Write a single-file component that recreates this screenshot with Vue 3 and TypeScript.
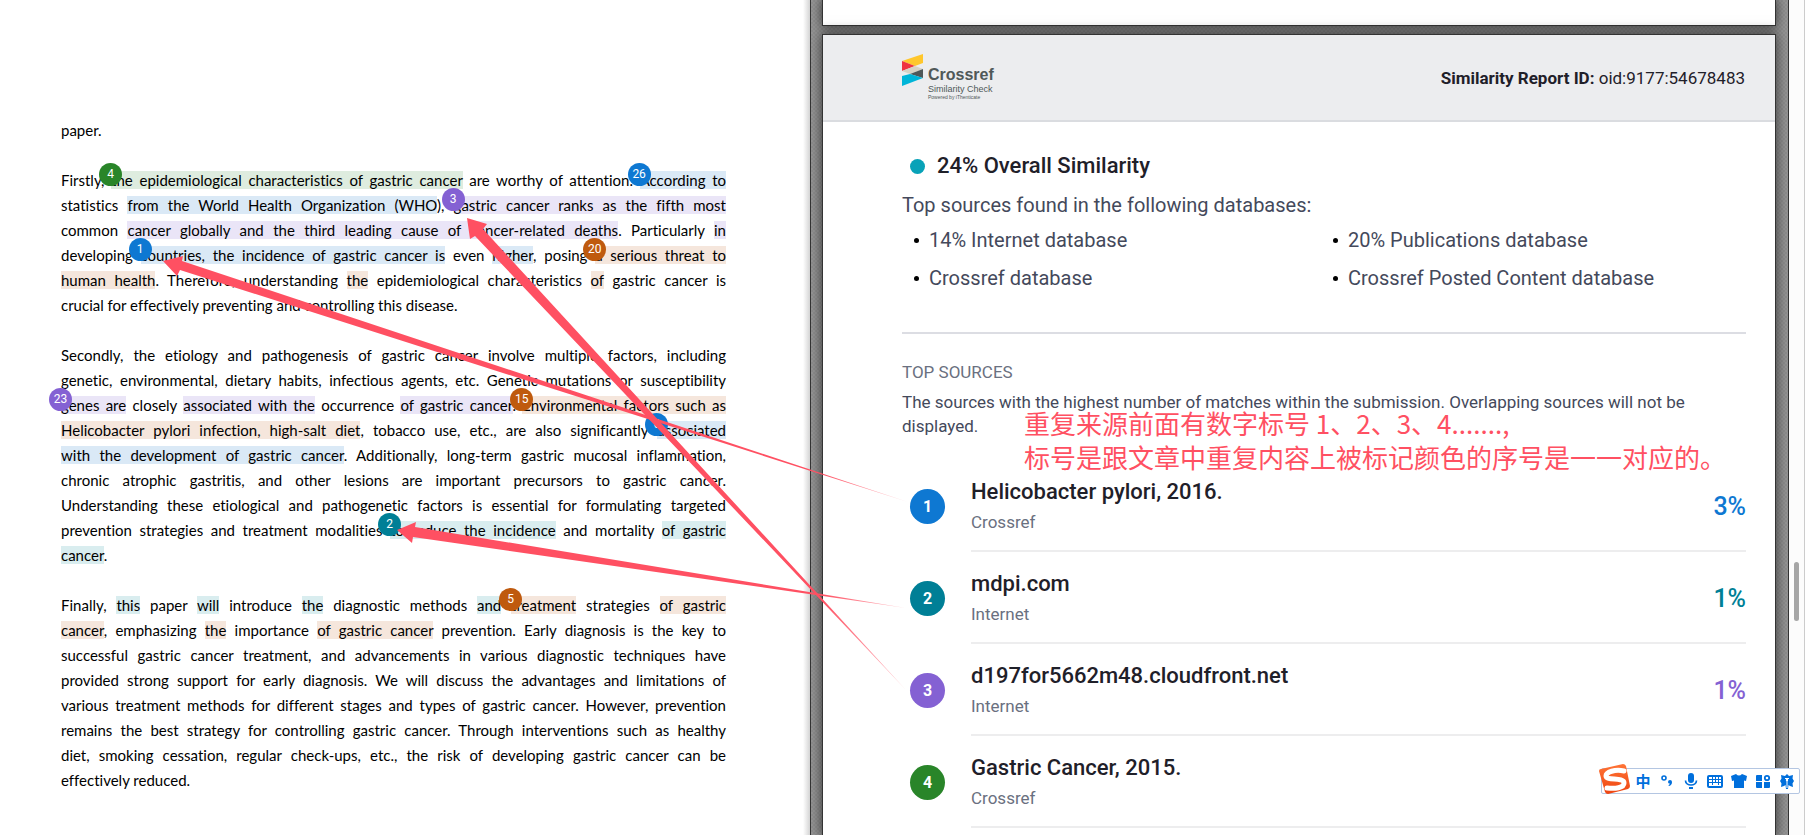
<script setup lang="ts">
type Tone = 'green' | 'blue' | 'purple' | 'orange' | 'teal'

interface Segment {
  text: string
  tone?: Tone
  badge?: number
}

interface Source {
  rank: number
  title: string
  kind: string
  percent: string
  tone: Tone
}

const plain = (text: string): Segment => ({ text })
const hit = (tone: Tone, text: string, badge?: number): Segment => ({ text, tone, badge })

const paragraphs: Segment[][][] = [
  [[plain('paper.')]],
  [
    [
      plain('Firstly, '),
      hit('green', 'the epidemiological characteristics of gastric cancer', 4),
      plain(' are worthy of attention. '),
      hit('blue', 'According to', 26),
    ],
    [
      plain('statistics '),
      hit('blue', 'from the World Health Organization (WHO'),
      plain('), '),
      hit('purple', 'gastric cancer ranks as the fifth most', 3),
    ],
    [
      plain('common '),
      hit('purple', 'cancer globally and the third leading cause of cancer-related deaths'),
      plain('. Particularly '),
      hit('purple', 'in'),
    ],
    [
      plain('developing '),
      hit('blue', 'countries, the incidence of gastric cancer is', 1),
      plain(' even '),
      hit('blue', 'higher'),
      plain(', posing '),
      hit('orange', 'a serious threat to', 20),
    ],
    [
      hit('orange', 'human health'),
      plain('. Therefore, understanding '),
      hit('orange', 'the'),
      plain(' epidemiological characteristics '),
      hit('orange', 'of'),
      plain(' gastric cancer is'),
    ],
    [plain('crucial for effectively preventing and controlling this disease.')],
  ],
  [
    [plain('Secondly, the etiology and pathogenesis of gastric cancer involve multiple factors, including')],
    [plain('genetic, environmental, dietary habits, infectious agents, etc. Genetic mutations or susceptibility')],
    [
      hit('purple', 'genes are', 23),
      plain(' closely '),
      hit('purple', 'associated with the'),
      plain(' occurrence '),
      hit('purple', 'of gastric cancer'),
      plain('. '),
      hit('orange', 'Environmental factors such as', 15),
    ],
    [
      hit('orange', 'Helicobacter pylori infection, high-salt diet'),
      plain(', tobacco use, etc., are also significantly '),
      hit('blue', 'associated', 6),
    ],
    [
      hit('blue', 'with the development of gastric cancer'),
      plain('. Additionally, long-term gastric mucosal inflammation,'),
    ],
    [plain('chronic atrophic gastritis, and other lesions are important precursors to gastric cancer.')],
    [plain('Understanding these etiological and pathogenetic factors is essential for formulating targeted')],
    [
      plain('prevention strategies and treatment modalities '),
      hit('teal', 'to reduce the incidence', 2),
      plain(' and mortality '),
      hit('teal', 'of gastric'),
    ],
    [hit('teal', 'cancer'), plain('.')],
  ],
  [
    [
      plain('Finally, '),
      hit('teal', 'this'),
      plain(' paper '),
      hit('teal', 'will'),
      plain(' introduce '),
      hit('teal', 'the'),
      plain(' diagnostic methods '),
      hit('teal', 'and'),
      plain(' '),
      hit('orange', 'treatment', 5),
      plain(' strategies '),
      hit('orange', 'of gastric'),
    ],
    [
      hit('orange', 'cancer'),
      plain(', emphasizing '),
      hit('orange', 'the'),
      plain(' importance '),
      hit('orange', 'of gastric cancer'),
      plain(' prevention. Early diagnosis is the key to'),
    ],
    [plain('successful gastric cancer treatment, and advancements in various diagnostic techniques have')],
    [plain('provided strong support for early diagnosis. We will discuss the advantages and limitations of')],
    [plain('various treatment methods for different stages and types of gastric cancer. However, prevention')],
    [plain('remains the best strategy for controlling gastric cancer. Through interventions such as healthy')],
    [plain('diet, smoking cessation, regular check-ups, etc., the risk of developing gastric cancer can be')],
    [plain('effectively reduced.')],
  ],
]

const databases: string[] = [
  '14% Internet database',
  '20% Publications database',
  'Crossref database',
  'Crossref Posted Content database',
]

const sources: Source[] = [
  { rank: 1, title: 'Helicobacter pylori, 2016.', kind: 'Crossref', percent: '3%', tone: 'blue' },
  { rank: 2, title: 'mdpi.com', kind: 'Internet', percent: '1%', tone: 'teal' },
  { rank: 3, title: 'd197for5662m48.cloudfront.net', kind: 'Internet', percent: '1%', tone: 'purple' },
  { rank: 4, title: 'Gastric Cancer, 2015.', kind: 'Crossref', percent: '', tone: 'green' },
]
</script>

<template>
  <div class="viewer">
    <main class="paper">
      <p v-for="(lines, p) in paragraphs" :key="p" class="para">
        <span v-for="(line, l) in lines" :key="l" class="line"><span
          v-for="(seg, s) in line" :key="s" :class="seg.tone ? ['hit', 'tint-' + seg.tone] : null"
        ><a v-if="seg.badge" href="#sources" :class="['badge', 'solid-' + seg.tone]">{{ seg.badge }}</a>{{ seg.text }}</span></span>
      </p>
    </main>

    <section class="report-pane">
      <div class="report-scroll">
        <div class="sheet sheet-prev"></div>
        <article class="sheet">
          <header class="sheet-head">
            <svg class="logo" width="96" height="50" viewBox="0 0 96 50" role="img" aria-label="Crossref Similarity Check">
              <path fill="#ffc72c" d="M0 8 21 1v9l-8 3z" />
              <path fill="#ef3340" d="M0 8l13 5-13 5z" />
              <path fill="#d8d2c4" d="M0 18l13-5 8 3-13 5z" />
              <path fill="#4f5858" d="M21 16v9L8 21z" />
              <path fill="#00b5d8" d="M0 23l8-2 13 4-21 8z" />
              <text x="26" y="27" class="logo-name">Crossref</text>
              <text x="26" y="39" class="logo-sub">Similarity Check</text>
              <text x="26" y="46" class="logo-tiny">Powered by iThenticate</text>
            </svg>
            <div class="report-id"><b>Similarity Report ID:</b> oid:9177:54678483</div>
          </header>

          <div class="sheet-body">
            <h1 class="overall"><i class="dot"></i>24% Overall Similarity</h1>
            <p class="lead">Top sources found in the following databases:</p>
            <ul class="databases">
              <li v-for="name in databases" :key="name">{{ name }}</li>
            </ul>

            <section id="sources" class="sources">
              <h2>TOP SOURCES</h2>
              <p class="hint">
                The sources with the highest number of matches within the submission. Overlapping sources will not be
                displayed.
              </p>
              <p class="note">重复来源前面有数字标号 1、2、3、4.......,<br />标号是跟文章中重复内容上被标记颜色的序号是一一对应的。</p>
              <ol class="source-list">
                <li v-for="src in sources" :key="src.rank">
                  <span :class="['rank', 'solid-' + src.tone]">{{ src.rank }}</span>
                  <div class="source">
                    <div class="source-text">
                      <h3>{{ src.title }}</h3>
                      <p>{{ src.kind }}</p>
                    </div>
                    <strong v-if="src.percent" :class="'ink-' + src.tone">{{ src.percent }}</strong>
                  </div>
                </li>
              </ol>
            </section>
          </div>
        </article>
      </div>
      <div class="scrollbar"><div class="thumb"></div></div>
    </section>

    <svg class="arrows" viewBox="0 0 1805 835" preserveAspectRatio="none" aria-hidden="true">
      <defs>
        <linearGradient id="fade" gradientUnits="userSpaceOnUse" x1="820" y1="0" x2="910" y2="0">
          <stop offset="0" stop-color="#ff5062" />
          <stop offset="1" stop-color="#ff5062" stop-opacity="0.3" />
        </linearGradient>
      </defs>
      <g fill="url(#fade)">
        <path d="M163 261 183 256 182 261 908 502 180 270 177 276z" />
        <path d="M397 530 416 522 415 527 906 608 413 537 412 543z" />
        <path d="M467 218 487 224 483 229 906 690 475 236 470 239z" />
      </g>
    </svg>

    <div class="ime" role="toolbar" aria-label="Input method">
      <svg class="ime-logo" width="32" height="32" viewBox="0 0 32 32" aria-hidden="true">
        <defs>
          <linearGradient id="ember" x1="0" y1="0" x2="0" y2="1">
            <stop offset="0" stop-color="#ff7436" />
            <stop offset="1" stop-color="#ee4410" />
          </linearGradient>
        </defs>
        <path fill="url(#ember)" d="M2 5 24 0q2 0 3 2l4 20q0 2-2 3l-20 5q-2 0-3-2L0 7q0-2 2-2z" />
        <path fill="none" stroke="#fff" stroke-width="5" stroke-linecap="round" d="M25 7C16 5 7 8 7 12c0 5 18 1 18 7 0 5-9 6-17 5" />
      </svg>
      <button type="button" class="zh">中</button>
      <button type="button" aria-label="Punctuation">
        <svg width="18" height="18" viewBox="0 0 18 18">
          <circle cx="6" cy="6" r="2" fill="none" stroke="currentColor" stroke-width="1.6" />
          <path fill="currentColor" d="M10 10q0-2 2-2t2 2q0 3-3 4l-.6-.8q1.400-.6 1.400-1.600-1.800 0-1.800-1.600z" />
        </svg>
      </button>
      <button type="button" aria-label="Voice">
        <svg width="18" height="18" viewBox="0 0 18 18">
          <rect x="6" y="1" width="6" height="10" rx="3" fill="currentColor" />
          <path fill="none" stroke="currentColor" stroke-width="1.700" d="M3.500 8.500c0 6 11 6 11 0" />
          <rect x="7" y="15" width="4" height="2" fill="currentColor" />
        </svg>
      </button>
      <button type="button" aria-label="Keyboard">
        <svg width="18" height="18" viewBox="0 0 18 18">
          <rect x="2" y="4" width="14" height="11" rx="1" fill="#fff" stroke="currentColor" stroke-width="2" />
          <path fill="none" stroke="currentColor" stroke-width="1" d="M6.500 5v8M9.500 5v6M12.500 5v8M3 7.500h12M3 10.500h12" />
        </svg>
      </button>
      <button type="button" aria-label="Skin">
        <svg width="18" height="18" viewBox="0 0 18 18">
          <path fill="currentColor" d="M6 2q3 3 6 0l5 2-1 5-2-.5V16H4V8.500L2 9 1 4z" />
        </svg>
      </button>
      <button type="button" aria-label="Toolbox">
        <svg width="18" height="18" viewBox="0 0 18 18">
          <g fill="currentColor">
            <path d="M3 3h5v6H2V4q0-1 1-1zM2 10h6v6H3q-1 0-1-1zM10 10h6v5q0 1-1 1h-5z" />
          </g>
          <circle cx="13" cy="6" r="2.200" fill="none" stroke="currentColor" stroke-width="1.800" />
        </svg>
      </button>
      <button type="button" aria-label="Settings">
        <svg width="18" height="18" viewBox="0 0 18 18">
          <path fill="currentColor" d="M9 2 11 4l4-1-.5 3.500L16 9l-1.500 2.500L15 15l-3-1-1.500-1-.5 4H8l-.5-4L6 14l-3 1 .5-3.500L2 9l1.500-2.500L3 3l4 1z" />
          <path fill="none" stroke="#fff" stroke-width="1" d="M9 9v7M7 6.500h4" />
          <circle cx="9" cy="8" r="1.200" fill="#fff" />
        </svg>
      </button>
    </div>
  </div>
</template>

<style>
body {
  margin: 0;
  overflow: hidden;
}
</style>

<style scoped>
.viewer {
  position: relative;
  display: grid;
  grid-template-columns: 810fr 995fr;
  height: 100vh;
  overflow: hidden;
  background: #fff;
  font-family: Roboto, "Noto Sans", sans-serif;
}

h1,
h2,
h3,
p,
ul,
ol {
  margin: 0;
  padding: 0;
  font-weight: 400;
}

/* manuscript */
.paper {
  box-sizing: border-box;
  padding: 118px 84px 0 61px;
  background: linear-gradient(to left, #d4d4d4, #fff 7px);
  color: #000;
  font: 15px/25px Lato, Carlito, "Noto Sans", sans-serif;
  font-variant-ligatures: none;
}

.para {
  margin-bottom: 25px;
}

.line {
  display: block;
  white-space: nowrap;
  text-align: justify;
  text-align-last: justify;
}

.line:last-child {
  text-align-last: left;
}

.hit {
  position: relative;
}

.badge {
  position: absolute;
  z-index: 1;
  left: -12px;
  top: -8px;
  width: 23px;
  height: 23px;
  border-radius: 50%;
  color: #fff;
  font: 12px/23px Roboto, sans-serif;
  text-align: center;
  text-align-last: center;
  text-decoration: none;
}

.tint-green { background: #deecdf; }
.tint-blue { background: #dae9f6; }
.tint-purple { background: #eae5f7; }
.tint-orange { background: #f5e6dc; }
.tint-teal { background: #d9edef; }

.solid-green { background: #298529; }
.solid-blue { background: #0e78d2; }
.solid-purple { background: #8461d3; }
.solid-orange { background: #bf5a0e; }
.solid-teal { background: #007f96; }

.ink-green { color: #298529; }
.ink-blue { color: #0e78d2; }
.ink-purple { color: #8461d3; }
.ink-teal { color: #007f96; }

/* report */
.report-pane {
  display: flex;
  min-width: 0;
  height: 100vh;
}

.report-scroll {
  flex: 1;
  display: flex;
  flex-direction: column;
  gap: 10px;
  box-sizing: border-box;
  min-width: 0;
  padding: 0 13px 0 12px;
  overflow: hidden;
  border-left: 1px solid #333;
  border-right: 1px solid #333;
  background:
    repeating-conic-gradient(rgba(0, 0, 0, 0.05) 0 25%, transparent 0 50%) 0 0 / 4px 4px,
    #979797;
}

.sheet {
  flex: 1 0 auto;
  background: #fff;
  box-shadow: 0 0 0 1px #333, 0 0 12px 2px rgba(0, 0, 0, 0.6);
}

.sheet-prev {
  flex: 0 0 25px;
}

.sheet-head {
  display: flex;
  align-items: center;
  justify-content: space-between;
  box-sizing: border-box;
  height: 87px;
  padding: 0 30px 0 79px;
  border-bottom: 2px solid #dadce0;
  background: #ecedef;
}

.logo {
  font-family: "Liberation Sans", Arial, sans-serif;
}

.logo text {
  fill: #4f5858;
}

.logo-name {
  font-size: 16px;
  font-weight: 700;
}

.logo-sub {
  font-size: 9px;
}

.logo-tiny {
  font-size: 5px;
}

.report-id {
  color: #1f2029;
  font-size: 17px;
  line-height: 24px;
}

.sheet-body {
  padding: 29px 29px 0 79px;
}

.overall {
  display: flex;
  align-items: center;
  gap: 12px;
  padding-left: 8px;
  color: #1f2029;
  font-size: 22px;
  font-weight: 500;
  line-height: 30px;
}

.dot {
  width: 15px;
  height: 15px;
  border-radius: 50%;
  background: #08a2b8;
}

.lead {
  margin-top: 9px;
  color: #44495b;
  font-size: 20px;
  line-height: 30px;
}

.databases {
  display: grid;
  grid-template-columns: 419fr 425fr;
  margin-top: 1px;
  padding-bottom: 35px;
  border-bottom: 2px solid #dcdde3;
  list-style: none;
  color: #44495b;
  font-size: 20px;
  line-height: 38px;
}

.databases li {
  display: flex;
  align-items: center;
  gap: 10px;
  padding-left: 12px;
}

.databases li::before {
  content: "";
  width: 5px;
  height: 5px;
  border-radius: 50%;
  background: #000;
}

.sources {
  position: relative;
  padding-top: 26px;
}

.sources h2 {
  color: #6a7080;
  font-size: 17px;
  line-height: 24px;
}

.hint {
  margin-top: 6px;
  color: #44495b;
  font-size: 17px;
  line-height: 24px;
}

.note {
  position: absolute;
  left: 122px;
  top: 72px;
  color: #ff5062;
  font: 26px/34px "Noto Sans CJK SC", sans-serif;
  white-space: nowrap;
}

.source-list {
  margin-top: 22px;
  list-style: none;
}

.source-list li {
  display: flex;
  gap: 26px;
  padding-left: 8px;
}

.rank {
  flex: none;
  width: 35px;
  height: 35px;
  margin-top: 29px;
  border-radius: 50%;
  color: #fff;
  font-size: 16px;
  font-weight: 700;
  line-height: 35px;
  text-align: center;
}

.source {
  flex: 1;
  display: flex;
  align-items: center;
  justify-content: space-between;
  box-sizing: border-box;
  height: 92px;
  padding-top: 2px;
  border-bottom: 2px solid #ededee;
}

.source h3 {
  color: #1f2029;
  font-size: 22px;
  font-weight: 500;
  line-height: 32px;
}

.source p {
  color: #6a7080;
  font-size: 17px;
  line-height: 28px;
}

.source strong {
  font-size: 25px;
  font-weight: 500;
}

.scrollbar {
  flex: none;
  box-sizing: border-box;
  width: 16px;
  padding: 562px 5px 0;
  border-right: 1px solid #ccc;
  background: #fcfcfc;
}

.thumb {
  width: 5px;
  height: 59px;
  border-radius: 3px;
  background: #a6a6a6;
}

.arrows {
  position: absolute;
  z-index: 2;
  left: 0;
  top: 0;
  width: 100%;
  height: 835px;
  pointer-events: none;
}

.ime {
  position: absolute;
  z-index: 3;
  right: 5px;
  bottom: 41px;
  display: flex;
  align-items: center;
  box-sizing: border-box;
  height: 26px;
  border: 1px solid #b4c6e2;
  border-radius: 2px;
  background: #fff;
}

.ime-logo {
  margin: 0 0 3px -3px;
}

.ime button {
  display: flex;
  align-items: center;
  justify-content: center;
  width: 24px;
  height: 24px;
  padding: 0;
  border: 0;
  background: none;
  color: #006fdc;
}

.ime .zh {
  font: 700 15px/24px "Noto Sans CJK SC", sans-serif;
}
</style>
